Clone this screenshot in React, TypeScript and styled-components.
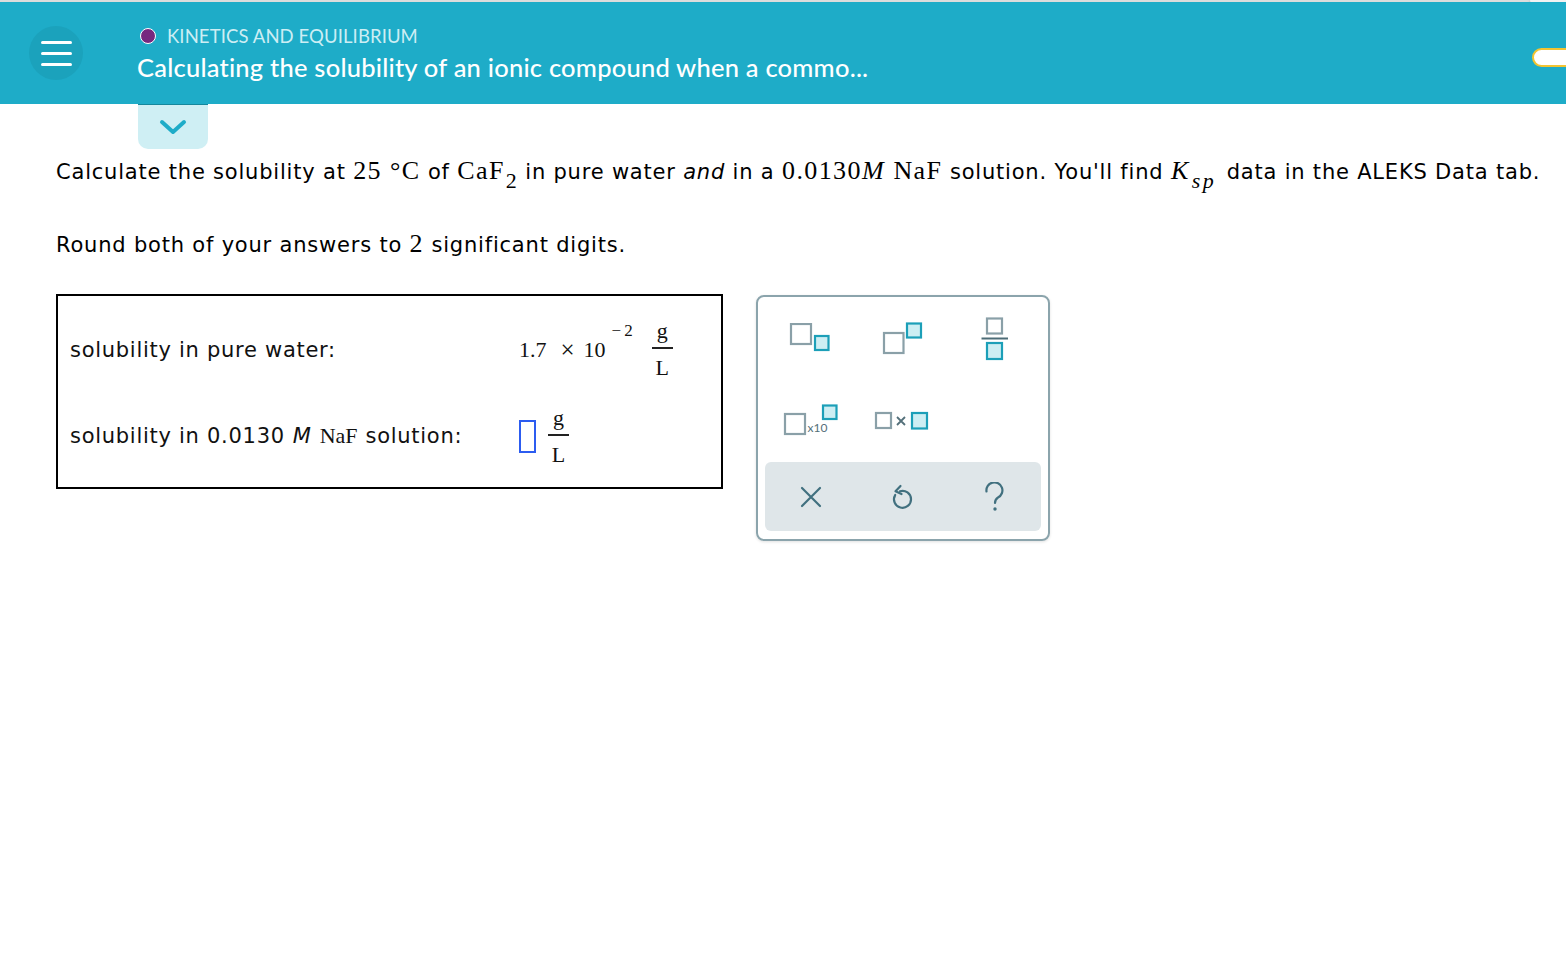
import React from "react";
import styled, { createGlobalStyle } from "styled-components";

const Global = createGlobalStyle`
  html, body { margin: 0; padding: 0; background: #fff; }
  body { font-family: "DejaVu Sans", Verdana, sans-serif; color: #000; }
`;

const Page = styled.div`
  position: relative;
  width: 1566px;
  min-height: 980px;
  overflow: hidden;
`;

const TopStrip = styled.div`
  height: 2px;
  background: #dcdcdc;
`;

const CornerTab = styled.div`
  position: absolute;
  top: 0;
  right: 0;
  width: 36px;
  height: 7px;
  background: #f2f2f2;
  border-bottom-left-radius: 8px;
  box-shadow: 0 1px 3px rgba(0,0,0,0.25);
`;

const Header = styled.header`
  position: relative;
  height: 102px;
  background: #1eacc8;
  display: flex;
  align-items: center;
`;

const MenuButton = styled.button`
  margin-left: 29px;
  width: 54px;
  height: 54px;
  border-radius: 50%;
  border: none;
  background: #1ba2bc;
  display: flex;
  flex-direction: column;
  align-items: center;
  justify-content: center;
  gap: 8px;
  padding: 0;
`;

const MenuLine = styled.span`
  display: block;
  width: 31px;
  height: 3px;
  border-radius: 2px;
  background: #fff;
`;

const TitleBlock = styled.div`
  margin-left: 54px;
  display: flex;
  flex-direction: column;
  gap: 5px;
`;

const CategoryRow = styled.div`
  display: flex;
  align-items: center;
  gap: 11px;
  margin-left: 3px;
`;

const Dot = styled.span`
  width: 16px;
  height: 16px;
  border-radius: 50%;
  background: #76287f;
  border: 1.5px solid #fff;
  box-sizing: border-box;
`;

const Category = styled.span`
  font-family: Lato, "Open Sans", sans-serif;
  font-size: 18.5px;
  color: #cdeef4;
  letter-spacing: 0.1px;
`;

const Title = styled.h1`
  margin: 0;
  font-family: Lato, "Open Sans", sans-serif;
  font-weight: 500;
  font-size: 25.5px;
  color: #fff;
  letter-spacing: 0.22px;
`;

const YellowPill = styled.div`
  position: absolute;
  right: -10px;
  top: 46px;
  width: 40px;
  height: 15px;
  border: 2px solid #f3c431;
  border-radius: 10px;
  background: #fff;
`;

const ExpandTab = styled.div`
  margin-left: 138px;
  width: 70px;
  height: 44px;
  background: #cfeff4;
  border-top: 2px solid #15879c;
  border-bottom-left-radius: 10px;
  border-bottom-right-radius: 10px;
  display: flex;
  align-items: center;
  justify-content: center;
  margin-top: -1px;
`;

const Content = styled.main`
  padding-left: 56px;
`;

const Para = styled.p<{ $top: number }>`
  margin: ${(p) => p.$top}px 0 0 0;
  font-size: 21px;
  line-height: 28px;
  white-space: nowrap;
  letter-spacing: 0.8px;
`;

const M = styled.span`
  font-family: "Liberation Serif", "Times New Roman", serif;
  font-size: 26px;
  letter-spacing: 1.4px;
`;

const MI = styled(M)<{ $after?: number }>`
  font-style: italic;
  margin-right: ${(p) => p.$after ?? 0}px;
`;

const Sub = styled.sub<{ $wide?: boolean }>`
  font-size: 22px;
  vertical-align: -9px;
  line-height: 0;
  margin-left: ${(p) => (p.$wide ? 2 : 1)}px;
  letter-spacing: ${(p) => (p.$wide ? 2.5 : 1)}px;
`;

const Row = styled.div`
  display: flex;
  align-items: flex-start;
  gap: 33px;
  margin-top: 35px;
`;

const AnswerBox = styled.div`
  box-sizing: border-box;
  width: 667px;
  height: 195px;
  border: 2px solid #000;
  display: grid;
  grid-template-columns: 461px 1fr;
  grid-template-rows: 87px 86px;
  padding-top: 10px;
`;

const Label = styled.div`
  padding-left: 12px;
  display: flex;
  align-items: center;
  font-size: 21px;
  letter-spacing: 0.72px;
  color: #111;
  white-space: nowrap;
`;

const LabelMath = styled.span`
  font-family: "Liberation Serif", serif;
  font-size: 22px;
  letter-spacing: 0;
  margin: 0 8px;
`;

const Value = styled.div`
  display: flex;
  align-items: center;
  font-family: "Liberation Serif", "Times New Roman", serif;
  font-size: 22px;
  color: #111;
`;

const Times = styled.span`
  margin: 0 9px 0 14px;
  font-size: 25px;
`;

const Exp = styled.span`
  font-size: 17px;
  align-self: flex-start;
  margin: 15px 16px 0 6px;
  letter-spacing: 3px;
`;

const Fraction = styled.span`
  display: inline-flex;
  flex-direction: column;
  align-items: center;
  font-size: 22px;
  line-height: 20px;
`;

const FracBar = styled.span`
  width: 21px;
  height: 2px;
  background: #222;
  margin: 6px 0 9px;
`;

const EmptyInput = styled.span`
  width: 13px;
  height: 29px;
  border: 2px solid #2c5cf0;
  margin-right: 12px;
`;

const Keypad = styled.div`
  box-sizing: border-box;
  width: 294px;
  height: 246px;
  margin-top: 1px;
  border: 2px solid #8ba4ac;
  border-radius: 8px;
  box-shadow: 0 1px 3px rgba(0,0,0,0.12);
  padding: 0 7px 8px;
  display: flex;
  flex-direction: column;
`;

const KeyGrid = styled.div`
  display: grid;
  grid-template-columns: repeat(3, 1fr);
  grid-template-rows: 82px 82px;
  padding-top: 1px;
`;

const Key = styled.button`
  border: none;
  background: transparent;
  padding: 0;
  display: flex;
  align-items: center;
  justify-content: center;
`;

const ActionBar = styled.div`
  flex: 1;
  background: #dfe6e9;
  border-radius: 6px;
  display: grid;
  grid-template-columns: repeat(3, 1fr);
`;

const GRAY = "#8aa0a8";
const TEAL = "#1c9fb8";
const TFILL = "#cdeef3";
const DARK = "#41707f";

const SubIcon = () => (
  <svg width="44" height="32" viewBox="0 0 44 32">
    <rect x="2" y="1" width="20" height="20" fill="none" stroke={GRAY} strokeWidth="2.2" />
    <rect x="26" y="13" width="13.5" height="14" fill={TFILL} stroke={TEAL} strokeWidth="2.2" />
  </svg>
);

const SupIcon = () => (
  <svg width="44" height="34" viewBox="0 0 44 34">
    <rect x="3" y="11" width="19.5" height="20" fill="none" stroke={GRAY} strokeWidth="2.2" />
    <rect x="26" y="1.5" width="14" height="14" fill={TFILL} stroke={TEAL} strokeWidth="2.2" />
  </svg>
);

const FracIcon = () => (
  <svg width="30" height="44" viewBox="0 0 30 44">
    <rect x="7" y="1.5" width="15" height="15" fill="none" stroke={GRAY} strokeWidth="2.2" />
    <line x1="1.5" y1="21.5" x2="28" y2="21.5" stroke="#4d6c77" strokeWidth="2" />
    <rect x="7" y="26" width="15" height="16" fill={TFILL} stroke={TEAL} strokeWidth="2.2" />
  </svg>
);

const SciIcon = () => (
  <svg width="56" height="34" viewBox="0 0 56 34">
    <rect x="2" y="10" width="20" height="20" fill="none" stroke={GRAY} strokeWidth="2.2" />
    <text x="24.5" y="28" fontFamily="Lato, sans-serif" fontSize="12" fill="#54707a">x10</text>
    <rect x="40" y="1.5" width="13.5" height="13.5" fill={TFILL} stroke={TEAL} strokeWidth="2.2" />
  </svg>
);

const MulIcon = () => (
  <svg width="58" height="22" viewBox="0 0 58 22">
    <rect x="2" y="3" width="15" height="15" fill="none" stroke={GRAY} strokeWidth="2.2" />
    <path d="M23 7 L31 15 M31 7 L23 15" stroke="#54707a" strokeWidth="1.8" />
    <rect x="38" y="3" width="15" height="15.5" fill={TFILL} stroke={TEAL} strokeWidth="2.2" />
  </svg>
);

const CloseIcon = () => (
  <svg width="24" height="24" viewBox="0 0 24 24">
    <path d="M3 3 L21 21 M21 3 L3 21" stroke={DARK} strokeWidth="2.2" strokeLinecap="round" />
  </svg>
);

const UndoIcon = () => (
  <svg width="26" height="28" viewBox="0 0 26 28">
    <path d="M10 8.2 A8.5 8.5 0 1 1 5.2 12" fill="none" stroke={DARK} strokeWidth="2.2" strokeLinecap="round" />
    <path d="M10.5 3 L5.5 8.2 L11.5 11" fill="none" stroke={DARK} strokeWidth="2.2" strokeLinecap="round" strokeLinejoin="round" />
  </svg>
);

const HelpIcon = () => (
  <svg width="22" height="30" viewBox="0 0 22 30">
    <path d="M2.5 9.5 A8 8 0 1 1 14 15.5 C11.5 17 11 18.5 11 21" fill="none" stroke={DARK} strokeWidth="2.2" strokeLinecap="round" />
    <circle cx="11" cy="27" r="1.7" fill={DARK} />
  </svg>
);

const Chevron = () => (
  <svg width="28" height="18" viewBox="0 0 28 18">
    <path d="M3 4 L14 14 L25 4" fill="none" stroke="#1eacc8" strokeWidth="4" strokeLinecap="round" strokeLinejoin="round" />
  </svg>
);

export default function App() {
  return (
    <Page>
      <Global />
      <TopStrip />
      <CornerTab />
      <Header>
        <MenuButton aria-label="menu">
          <MenuLine />
          <MenuLine />
          <MenuLine />
        </MenuButton>
        <TitleBlock>
          <CategoryRow>
            <Dot />
            <Category>KINETICS AND EQUILIBRIUM</Category>
          </CategoryRow>
          <Title>Calculating the solubility of an ionic compound when a commo...</Title>
        </TitleBlock>
        <YellowPill />
      </Header>
      <ExpandTab>
        <Chevron />
      </ExpandTab>
      <Content>
        <Para $top={8}>
          Calculate the solubility at <M>25 °C</M> of <M>CaF<Sub>2</Sub></M> in pure water <i>and</i> in a{" "}
          <M>0.0130</M><MI $after={1}>M</MI> <M>NaF</M> solution. You'll find <MI $after={3}>K<Sub $wide>sp</Sub></MI> data in the ALEKS Data tab.
        </Para>
        <Para $top={44}>
          Round both of your answers to <M>2</M> significant digits.
        </Para>
        <Row>
          <AnswerBox>
            <Label>solubility in pure water:</Label>
            <Value>
              1.7<Times>×</Times>10<Exp>−2</Exp>
              <Fraction>
                <span>g</span>
                <FracBar />
                <span>L</span>
              </Fraction>
            </Value>
            <Label>
              solubility in 0.0130 <i style={{ marginLeft: 8 }}>M</i>
              <LabelMath>NaF</LabelMath>solution:
            </Label>
            <Value>
              <EmptyInput />
              <Fraction>
                <span>g</span>
                <FracBar />
                <span>L</span>
              </Fraction>
            </Value>
          </AnswerBox>
          <Keypad>
            <KeyGrid>
              <Key aria-label="subscript"><SubIcon /></Key>
              <Key aria-label="superscript"><SupIcon /></Key>
              <Key aria-label="fraction"><FracIcon /></Key>
              <Key aria-label="scientific notation"><SciIcon /></Key>
              <Key aria-label="multiply"><MulIcon /></Key>
              <Key aria-label="empty" />
            </KeyGrid>
            <ActionBar>
              <Key aria-label="clear"><CloseIcon /></Key>
              <Key aria-label="undo"><UndoIcon /></Key>
              <Key aria-label="help"><HelpIcon /></Key>
            </ActionBar>
          </Keypad>
        </Row>
      </Content>
    </Page>
  );
}
